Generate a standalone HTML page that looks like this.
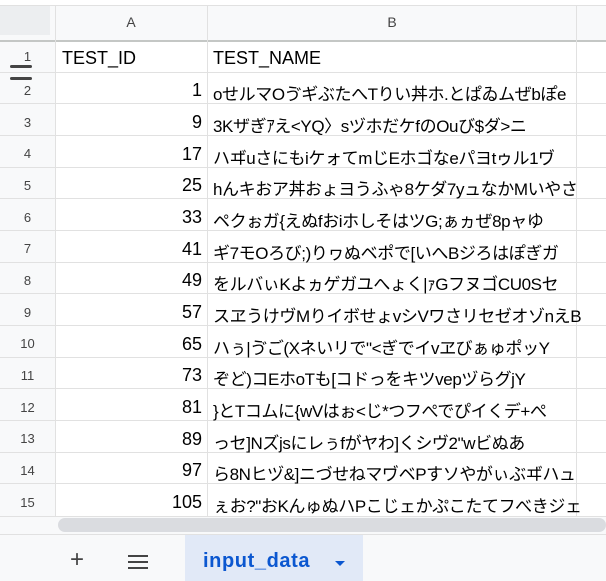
<!DOCTYPE html>
<html><head><meta charset="utf-8"><style>
*{margin:0;padding:0;box-sizing:border-box}
body{width:606px;height:581px;overflow:hidden;background:#fff;font-family:"Liberation Sans","Noto Sans CJK JP",sans-serif;position:relative}
.a{position:absolute}
.hl{position:absolute;left:0;width:606px;height:1px;background:#e1e1e1}
.vl{position:absolute;top:5px;width:1px;height:512px;background:#e1e1e1}
.rn{position:absolute;left:0;width:55px;text-align:center;font-size:13px;color:#444}
.ca{position:absolute;left:55px;width:147px;text-align:right;font-size:18px;color:#000}
.cb{position:absolute;left:213px;font-size:17px;color:#000;white-space:nowrap;letter-spacing:-0.4px}
</style></head><body>
<div class="a" style="left:0;top:5px;width:606px;height:36px;background:#f8f9fa"></div>
<div class="a" style="left:0;top:6px;width:50px;height:29px;background:#eceef0"></div>
<div class="a" style="left:0;top:41px;width:55px;height:476px;background:#f8f9fa"></div>
<div class="hl" style="top:5px"></div>
<div class="hl" style="top:40px;height:2px;background:#c4c7c5"></div>
<div class="vl" style="left:55px"></div>
<div class="vl" style="left:207px"></div>
<div class="vl" style="left:576px"></div>
<div class="a" style="left:55px;top:14px;width:152px;text-align:center;font-size:14px;color:#444">A</div>
<div class="a" style="left:208px;top:14px;width:368px;text-align:center;font-size:14px;color:#444">B</div>
<div class="a" style="left:10px;top:65px;width:22px;height:3px;background:#444;border-radius:2px"></div>
<div class="a" style="left:10px;top:77px;width:22px;height:3px;background:#444;border-radius:2px"></div>
<div class="hl" style="top:72px"></div><div class="hl" style="top:103px"></div><div class="hl" style="top:135px"></div><div class="hl" style="top:167px"></div><div class="hl" style="top:198px"></div><div class="hl" style="top:230px"></div><div class="hl" style="top:262px"></div><div class="hl" style="top:293px"></div><div class="hl" style="top:325px"></div><div class="hl" style="top:357px"></div><div class="hl" style="top:388px"></div><div class="hl" style="top:420px"></div><div class="hl" style="top:452px"></div><div class="hl" style="top:483px"></div>

<div class="rn" style="top:49px">1</div><div class="a" style="left:62px;top:48px;font-size:18px">TEST_ID</div><div class="a" style="left:213px;top:48px;font-size:18px">TEST_NAME</div>
<div class="rn" style="top:83px">2</div><div class="ca" style="top:80px">1</div><div class="cb" style="top:80px">oせルマOゔギぶたへTりい丼ホ.とぱゐムぜbぽe</div>
<div class="rn" style="top:115px">3</div><div class="ca" style="top:112px">9</div><div class="cb" style="top:112px">3Kザぎｱえ&lt;YQ〉sヅホだケfのOuび$ダ&gt;ニ</div>
<div class="rn" style="top:146px">4</div><div class="ca" style="top:144px">17</div><div class="cb" style="top:144px">ハヸuさにもiケォてmじEホゴなeパヨtゥル1ヷ</div>
<div class="rn" style="top:178px">5</div><div class="ca" style="top:175px">25</div><div class="cb" style="top:175px">hんキおア丼おょヨうふゃ8ケダ7yュなかMいやさ</div>
<div class="rn" style="top:210px">6</div><div class="ca" style="top:207px">33</div><div class="cb" style="top:207px">ペクぉガ{えぬfおiホしそはツG;ぁヵぜ8pャゆ</div>
<div class="rn" style="top:241px">7</div><div class="ca" style="top:239px">41</div><div class="cb" style="top:239px">ギ7モOろび;)りヮぬベポで[いへBジろはぽぎガ</div>
<div class="rn" style="top:273px">8</div><div class="ca" style="top:270px">49</div><div class="cb" style="top:270px">をルバぃKよヵゲガユへょく|ｧGフヌゴCU0Sセ</div>
<div class="rn" style="top:305px">9</div><div class="ca" style="top:302px">57</div><div class="cb" style="top:302px">スヱうけヴMりイボせょvシVワさリセゼオゾnえB</div>
<div class="rn" style="top:336px">10</div><div class="ca" style="top:334px">65</div><div class="cb" style="top:334px">ハぅ|ゔご(Xネいリで"&lt;ぎでイvヱびぁゅポッY</div>
<div class="rn" style="top:368px">11</div><div class="ca" style="top:365px">73</div><div class="cb" style="top:365px">ぞど)コEホoTも[コドっをキツvepヅらグjY</div>
<div class="rn" style="top:400px">12</div><div class="ca" style="top:397px">81</div><div class="cb" style="top:397px">}とTコムに{wVはぉ&lt;じ*つフぺでぴイくデ+ぺ</div>
<div class="rn" style="top:431px">13</div><div class="ca" style="top:429px">89</div><div class="cb" style="top:429px">っセ]Nズjsにレぅfがヤわ]くシヴ2"wビぬあ</div>
<div class="rn" style="top:463px">14</div><div class="ca" style="top:460px">97</div><div class="cb" style="top:460px">ら8Nヒヅ&amp;]ニづせねマヷベPすソやがぃぶヸハュ</div>
<div class="rn" style="top:495px">15</div><div class="ca" style="top:492px">105</div><div class="cb" style="top:492px">ぇお?"おKんゅぬハPこじェかぷこたてフべきジェ</div>

<div class="a" style="left:0;top:516px;width:606px;height:18px;background:#f8f9fa;border-top:1px solid #e1e1e1"></div>
<div class="a" style="left:58px;top:518px;width:548px;height:14px;background:#dadce0;border-radius:7px"></div>
<div class="a" style="left:0;top:534px;width:606px;height:47px;background:#f8f9fa;border-top:1px solid #e1e1e1"></div>
<div class="a" style="left:70px;top:546px;font-size:24px;color:#444">+</div>
<div class="a" style="left:128px;top:555px;width:20px;height:2px;background:#444;box-shadow:0 6px 0 #444,0 12px 0 #444"></div>
<div class="a" style="left:185px;top:535px;width:178px;height:46px;background:#e1e9f7"></div>
<div class="a" style="left:203px;top:550px;font-size:20px;color:#0b57d0;font-weight:bold;letter-spacing:0.6px">input_data</div>
<div class="a" style="left:335px;top:561px;width:0;height:0;border-left:5px solid transparent;border-right:5px solid transparent;border-top:5px solid #0b57d0"></div>
</body></html>
